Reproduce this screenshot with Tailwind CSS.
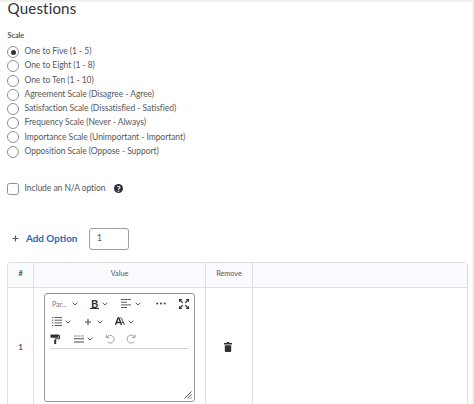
<!DOCTYPE html>
<html lang="en">
<head>
<meta charset="utf-8">
<title>Questions</title>
<script src="https://cdn.jsdelivr.net/npm/@tailwindcss/browser@4"></script>
</head>
<body class="h-[404px] w-[474px] overflow-hidden bg-white font-['Lato',sans-serif] text-[#55585a]">
<svg class="hidden">
  <symbol id="chev" viewBox="0 0 6 4"><path d="M.6.7 3 3 5.400.7" fill="none" stroke="#5c5f61" stroke-width="1"/></symbol>
</svg>
<main class="h-[404px] w-[474px] border-r-2 border-t-2 border-r-[#f1f1f1] border-t-[#f1f1f1] pl-[7px]">
  <h1 class="mt-[-5px] h-[22px] pl-[0.6px] text-[15.1px] leading-[22px] tracking-[0.15px] text-[#303335]">Questions</h1>
  <h2 class="mt-[11px] h-3 pl-[0.500px] text-[7.2px] font-bold leading-3">Scale</h2>
  <div class="mt-[3px] text-[8.5px] tracking-[-0.05px]">
    <label class="flex h-[14.22px] items-center gap-[5.500px]"><span class="flex size-[12px] items-center justify-center rounded-full border border-[#8d9295]"><i class="size-[5px] rounded-full bg-[#303335]"></i></span><span class="mt-[-2px]">One to Five (1 - 5)</span></label>
    <label class="flex h-[14.22px] items-center gap-[5.500px]"><span class="size-[12px] rounded-full border border-[#8d9295]"></span><span class="mt-[-1px]">One to Eight (1 - 8)</span></label>
    <label class="flex h-[14.22px] items-center gap-[5.500px]"><span class="size-[12px] rounded-full border border-[#8d9295]"></span><span class="mt-[-1px]">One to Ten (1 - 10)</span></label>
    <label class="flex h-[14.22px] items-center gap-[5.500px]"><span class="size-[12px] rounded-full border border-[#8d9295]"></span><span class="mt-[-1px]">Agreement Scale (Disagree - Agree)</span></label>
    <label class="flex h-[14.22px] items-center gap-[5.500px]"><span class="size-[12px] rounded-full border border-[#8d9295]"></span><span class="mt-[-1px]">Satisfaction Scale (Dissatisfied - Satisfied)</span></label>
    <label class="flex h-[14.22px] items-center gap-[5.500px]"><span class="size-[12px] rounded-full border border-[#8d9295]"></span><span class="mt-[-1px]">Frequency Scale (Never - Always)</span></label>
    <label class="flex h-[14.22px] items-center gap-[5.500px]"><span class="size-[12px] rounded-full border border-[#8d9295]"></span><span class="mt-[-1px]">Importance Scale (Unimportant - Important)</span></label>
    <label class="flex h-[14.22px] items-center gap-[5.500px]"><span class="size-[12px] rounded-full border border-[#8d9295]"></span><span class="mt-[-1px]">Opposition Scale (Oppose - Support)</span></label>
  </div>
  <div class="mt-[22px] flex h-4 items-center text-[8.5px] tracking-[-0.05px]">
    <span class="mr-[5.500px] size-[12px] rounded-[2.500px] border border-[#8d9295]"></span>
    <span class="mt-[-1px] w-[89.500px]">Include an N/A option</span>
    <span class="flex size-[9px] items-center justify-center rounded-full bg-[#303335] text-[8px] font-black leading-none text-white">?</span>
  </div>
  <div class="mt-[31px] flex h-[22px] items-center">
    <svg class="ml-[5px] mr-[7px] size-[7px]" viewBox="0 0 7 7"><path d="M3.500.5v6M.5 3.500h6" stroke="#55585a" stroke-width="1.200"/></svg>
    <span class="w-[63px] whitespace-nowrap text-[9.9px] font-bold text-[#1d6cb5]">Add Option</span>
    <span class="h-[22px] w-[40px] rounded-[3px] border border-[#9a9ea1] pl-[7px] text-[8.5px] leading-[19px]">1</span>
  </div>
  <div class="mt-[12px] grid h-[160px] w-[461px] grid-cols-[26px_172px_47px_1fr] grid-rows-[25px_1fr] rounded-t-[3px] border border-[#dcdfe2] text-[7.3px]">
    <div class="flex items-center justify-center border-b border-r border-[#dcdfe2] bg-[#f9fbff] font-bold">#</div>
    <div class="flex items-center justify-center border-b border-r border-[#dcdfe2] bg-[#f9fbff]">Value</div>
    <div class="flex items-center justify-center border-b border-r border-[#dcdfe2] bg-[#f9fbff]">Remove</div>
    <div class="border-b border-[#dcdfe2] bg-[#f9fbff]"></div>
    <div class="border-r border-[#dcdfe2] pt-[53px] text-center text-[8px] font-bold leading-3">1</div>
    <div class="border-r border-[#dcdfe2] pl-[10px] pt-[5px]">
      <div class="relative h-[109px] w-[151px] rounded-[3px] border border-[#96999c]">
        <div class="flex h-[20px] items-center pl-[7px]">
          <span class="w-[20px] text-[7px] text-[#75787a]">Par...</span>
          <svg class="size-[6px]"><use href="#chev"/></svg>
          <b class="ml-[12px] w-[9px] border-b border-[#303335] text-center text-[11px] leading-[9px] text-[#303335]">B</b>
          <svg class="ml-[3px] size-[6px]"><use href="#chev"/></svg>
          <svg class="ml-[13px] h-[9px] w-[10px]" viewBox="0 0 10 9"><path d="M0 .5h10M0 3.200h6M0 5.900h10M0 8.500h6" stroke="#494c4e" stroke-width=".9"/></svg>
          <svg class="ml-[4px] size-[6px]"><use href="#chev"/></svg>
          <svg class="ml-[15px] h-[3px] w-[10px]" viewBox="0 0 10 3"><g fill="#494c4e"><circle cx="1.300" cy="1.500" r="1.100"/><circle cx="5" cy="1.500" r="1.100"/><circle cx="8.700" cy="1.500" r="1.100"/></g></svg>
          <svg class="ml-[13px] size-[10px]" viewBox="0 0 10 10"><path d="M0 0h3.300L0 3.300zM10 0v3.300L6.700 0zM0 10V6.700L3.300 10zM10 10H6.700L10 6.700z" fill="#303335"/><path d="m1 1 2.700 2.700M9 1 6.300 3.700M1 9l2.700-2.700M9 9 6.300 6.300" stroke="#303335" stroke-width="1.300"/></svg>
        </div>
        <div class="flex h-[16px] items-center pl-[7px]">
          <svg class="h-[9px] w-[10px]" viewBox="0 0 10 9"><path d="M0 .5h1.300M2.500.5H10M0 3.200h1.300M2.500 3.200H10M0 5.900h1.300M2.500 5.900H10M0 8.500h1.300M2.500 8.500H10" stroke="#494c4e" stroke-width=".9"/></svg>
          <svg class="ml-[3px] size-[6px]"><use href="#chev"/></svg>
          <svg class="ml-[14px] size-[6px]" viewBox="0 0 6 6"><path d="M3 0v6M0 3h6" stroke="#494c4e" stroke-width="1.100"/></svg>
          <svg class="ml-[6px] size-[6px]"><use href="#chev"/></svg>
          <svg class="ml-[12px] h-[9px] w-[10px]" viewBox="0 0 10 9"><path d="M.4 8 3.100 1h.8l2.700 7M1.500 5.500h4" fill="none" stroke="#303335" stroke-width="1.400"/><path d="m5.300.8 1.200.3L9.500 8M6.500 5.500h2" fill="none" stroke="#494c4e"/></svg>
          <svg class="ml-[3px] size-[6px]"><use href="#chev"/></svg>
        </div>
        <div class="flex h-[18px] items-center pl-[5px]">
          <svg class="size-[10px]" viewBox="0 0 10 10"><path d="M.5.5h8v3.300h-8z" fill="#303335"/><path d="M8 1.500h1.500v3.300H5.200V9.500" fill="none" stroke="#303335"/><path d="M4.200 6h2v4h-2z" fill="#303335"/></svg>
          <svg class="ml-[14px] h-[8px] w-[10px]" viewBox="0 0 10 8"><path d="M0 1h3M3.500 1h3M7 1h3" stroke="#8b8f92"/><path d="M0 3.800h10M0 7h10" stroke="#494c4e" stroke-width="1.100"/></svg>
          <svg class="ml-[3px] size-[6px]"><use href="#chev"/></svg>
          <svg class="ml-[12px] size-[10px]" viewBox="0 0 10 10"><path d="M1.500.7v3h3M1.800 3.300A3.900 3.900 0 1 1 2.500 8" fill="none" stroke="#95989a" stroke-width=".9"/></svg>
          <svg class="ml-[11px] size-[10px]" viewBox="0 0 10 10"><path d="M9 .5v3H6M8.700 3.300A4 4 0 1 0 8.300 7.500" fill="none" stroke="#95989a" stroke-width=".9"/></svg>
        </div>
        <div class="mx-[5px] border-t border-[#d3d5d7]"></div>
        <svg class="absolute bottom-[2px] right-[2px] size-[8px]" viewBox="0 0 8 8"><path d="M.5 7.500l7-7M3.500 7.500l4-4M6.300 7.500l1.200-1.200" stroke="#494c4e"/></svg>
      </div>
    </div>
    <div class="flex justify-center border-r border-[#dcdfe2] pt-[54px]">
      <svg class="mr-[3px] h-[10px] w-[8px]" viewBox="0 0 8 10"><path d="M3 0h2l.5 1H8v1.500H0V1h2.500zM.8 3.200h6.400V9a1 1 0 0 1-1 1H1.800a1 1 0 0 1-1-1z" fill="#303335"/></svg>
    </div>
    <div></div>
  </div>
</main>
</body>
</html>
